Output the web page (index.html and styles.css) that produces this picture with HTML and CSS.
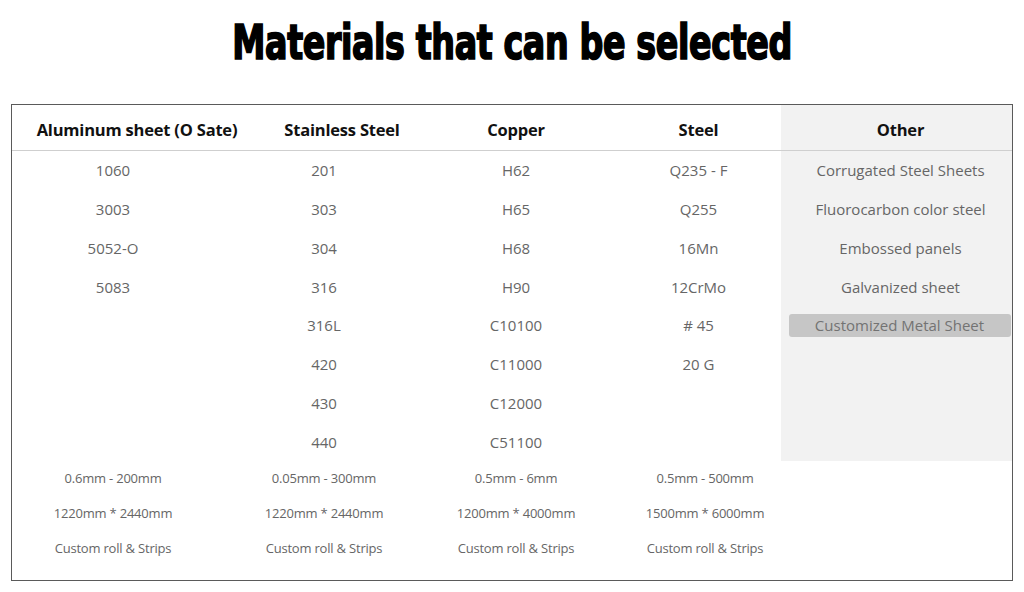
FILE: index.html
```html
<!DOCTYPE html>
<html lang="en">
<head>
<meta charset="utf-8">
<title>Materials that can be selected</title>
<link rel="stylesheet" href="styles.css">
</head>
<body>
<div class="page">
  <h1 class="title"><span class="title-text">Materials that can be selected</span></h1>
  <div class="table">
    <div class="head">
      <div class="hcell">Aluminum sheet (O Sate)</div>
      <div class="hcell">Stainless Steel</div>
      <div class="hcell">Copper</div>
      <div class="hcell c4">Steel</div>
      <div class="hcell other">Other</div>
    </div>
    <div class="body">
      <div class="col">
        <div class="cell">1060</div>
        <div class="cell">3003</div>
        <div class="cell">5052-O</div>
        <div class="cell">5083</div>
      </div>
      <div class="col">
        <div class="cell">201</div>
        <div class="cell">303</div>
        <div class="cell">304</div>
        <div class="cell">316</div>
        <div class="cell">316L</div>
        <div class="cell">420</div>
        <div class="cell">430</div>
        <div class="cell">440</div>
      </div>
      <div class="col">
        <div class="cell">H62</div>
        <div class="cell">H65</div>
        <div class="cell">H68</div>
        <div class="cell">H90</div>
        <div class="cell">C10100</div>
        <div class="cell">C11000</div>
        <div class="cell">C12000</div>
        <div class="cell">C51100</div>
      </div>
      <div class="col c4">
        <div class="cell">Q235 - F</div>
        <div class="cell">Q255</div>
        <div class="cell">16Mn</div>
        <div class="cell">12CrMo</div>
        <div class="cell"># 45</div>
        <div class="cell">20 G</div>
      </div>
      <div class="col other">
        <div class="cell">Corrugated Steel Sheets</div>
        <div class="cell">Fluorocarbon color steel</div>
        <div class="cell">Embossed panels</div>
        <div class="cell">Galvanized sheet</div>
        <div class="cell"><span class="pill">Customized Metal Sheet</span></div>
      </div>
    </div>
    <div class="specs">
      <div class="col">
        <div class="scell">0.6mm - 200mm</div>
        <div class="scell">1220mm * 2440mm</div>
        <div class="scell">Custom roll &amp; Strips</div>
      </div>
      <div class="col">
        <div class="scell">0.05mm - 300mm</div>
        <div class="scell">1220mm * 2440mm</div>
        <div class="scell">Custom roll &amp; Strips</div>
      </div>
      <div class="col">
        <div class="scell">0.5mm - 6mm</div>
        <div class="scell">1200mm * 4000mm</div>
        <div class="scell">Custom roll &amp; Strips</div>
      </div>
      <div class="col s4">
        <div class="scell">0.5mm - 500mm</div>
        <div class="scell">1500mm * 6000mm</div>
        <div class="scell">Custom roll &amp; Strips</div>
      </div>
      <div class="col"></div>
    </div>
  </div>
</div>
</body>
</html>
```
FILE: styles.css
```css
* { box-sizing: border-box; }
html, body { margin: 0; padding: 0; background: #fff; }
body { font-family: "Open Sans", "Noto Sans", "Liberation Sans", sans-serif; }
.page { width: 1024px; height: 592px; padding: 15px 0 0 11px; }
.title {
  margin: 0 0 0 -11px;
  height: 89px;
  padding-top: 4px;
  text-align: center;
  font-family: "DejaVu Sans Condensed", "DejaVu Sans", sans-serif;
  font-stretch: condensed;
  font-weight: 700;
  font-size: 50px;
  line-height: 50px;
  color: #000;
}
.title-text {
  display: inline-block;
  -webkit-text-stroke: 1.8px #000;
  letter-spacing: -0.5px;
  transform: scaleX(0.74) scaleY(0.95);
  transform-origin: center top;
  white-space: nowrap;
}
.table {
  width: 1002px;
  height: 477px;
  border: 1px solid #5a5a5a;
  display: flex;
  flex-direction: column;
}
.head {
  display: grid;
  grid-template-columns: 250px 160px 188px 171px 231px;
  height: 46px;
  border-bottom: 1px solid #cfcfcf;
}
.hcell {
  display: flex;
  align-items: center;
  justify-content: center;
  padding-top: 4px;
  font-weight: 700;
  font-size: 16.5px;
  color: #111;
  letter-spacing: -0.2px;
}
.hcell.c4 { padding-left: 6px; }
.hcell.other { background: #f2f2f2; padding-left: 8px; }
.body {
  display: grid;
  grid-template-columns: 202px 220px 164px 183px 231px;
  height: 309px;
}
.col { display: flex; flex-direction: column; }
.col.c4 { padding-left: 18px; }
.col.other { background: #f2f2f2; padding-left: 8px; }
.cell {
  height: 38.75px;
  display: flex;
  align-items: center;
  justify-content: center;
  font-size: 15px;
  color: #666;
  letter-spacing: 0;
}
.pill {
  display: block;
  width: 222px;
  height: 23px;
  line-height: 23px;
  margin-left: -2px;
  text-align: center;
  background: #c6c6c6;
  border-radius: 3px;
  color: #737373;
}
.specs {
  display: grid;
  grid-template-columns: 202px 220px 164px 183px 231px;
}
.col.s4 { padding-left: 31px; }
.scell {
  height: 35px;
  display: flex;
  align-items: center;
  justify-content: center;
  font-size: 13px;
  color: #666;
  letter-spacing: -0.2px;
}
```
